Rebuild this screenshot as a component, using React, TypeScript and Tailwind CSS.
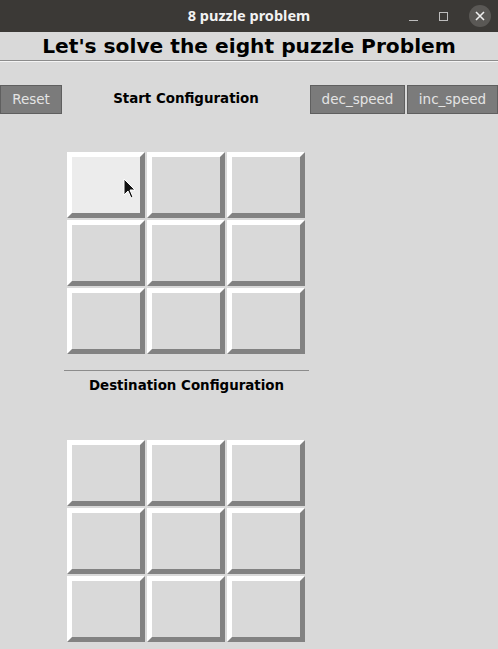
import React from 'react';

const tk = { fontFamily: '"DejaVu Sans", "Liberation Sans", sans-serif' };

function Tile({ active = false }: { active?: boolean }) {
  return (
    <div
      className={`h-[66px] w-[78px] border-[5px] border-solid border-t-white border-l-white border-r-[#828282] border-b-[#828282] ${
        active ? 'bg-[#ececec]' : 'bg-[#d9d9d9]'
      }`}
    />
  );
}

function Board({ hover = false }: { hover?: boolean }) {
  return (
    <div className="relative ml-[67px] grid w-max grid-cols-[78px_78px_78px] gap-[2px]">
      {Array.from({ length: 9 }).map((_, i) => (
        <Tile key={i} active={hover && i === 0} />
      ))}
      {hover && (
        <svg className="absolute left-[56px] top-[26px]" width="14" height="22" viewBox="0 0 14 22">
          <path d="M1 1 L1 17 L5 13 L8 20 L10 19 L7 12 L12 12 Z" fill="#111" stroke="#fff" strokeWidth="1" />
        </svg>
      )}
    </div>
  );
}

function TkButton({ label, className }: { label: string; className: string }) {
  return (
    <button
      className={`flex h-[29px] items-center justify-center border border-[#5f5f5f] bg-[#7b7b7b] text-[13.5px] text-[#e4e4e4] ${className}`}
      style={tk}
    >
      {label}
    </button>
  );
}

export default function App() {
  return (
    <div className="h-[649px] w-[498px] overflow-hidden bg-[#d9d9d9]" style={tk}>
      {/* title bar */}
      <div className="relative flex h-[32px] items-center justify-center bg-[#3b3936]">
        <span className="text-[14.5px] font-bold text-[#f2f2f2]" style={{ fontFamily: '"Noto Sans", "DejaVu Sans", sans-serif' }}>
          8 puzzle problem
        </span>
        <div className="absolute right-[7px] top-0 flex h-[32px] items-center gap-[21px]">
          <div className="mt-[8px] h-[1px] w-[9px] bg-[#bdbdbd]" />
          <div className="h-[9px] w-[9px] border border-[#bdbdbd]" />
          <div className="flex h-[22px] w-[22px] items-center justify-center rounded-full bg-[#5a5855]">
            <svg width="10" height="10" viewBox="0 0 10 10">
              <path d="M1 1 L9 9 M9 1 L1 9" stroke="#f0f0f0" strokeWidth="1.6" />
            </svg>
          </div>
        </div>
      </div>

      {/* heading */}
      <div className="flex h-[29px] items-center justify-center border-b border-[#8c8c8c] text-[20.2px] font-bold text-black">
        Let's solve the eight puzzle Problem
      </div>
      <div className="h-[1px] bg-[#f4f4f4]" />

      {/* controls */}
      <div className="mt-[23px] flex h-[29px] items-center">
        <TkButton label="Reset" className="w-[62px]" />
        <div className="flex w-[248px] justify-center text-[13.4px] font-bold text-black">Start Configuration</div>
        <TkButton label="dec_speed" className="w-[95px]" />
        <TkButton label="inc_speed" className="ml-[2px] w-[91px]" />
      </div>

      <div className="mt-[38px]">
        <Board hover />
      </div>

      <div className="ml-[64px] mt-[16px] h-[1px] w-[245px] bg-[#8c8c8c]" />
      <div className="ml-[64px] mt-[5px] flex h-[20px] w-[245px] items-center justify-center text-[13.4px] font-bold text-black">
        Destination Configuration
      </div>

      <div className="mt-[44px]">
        <Board />
      </div>
    </div>
  );
}
